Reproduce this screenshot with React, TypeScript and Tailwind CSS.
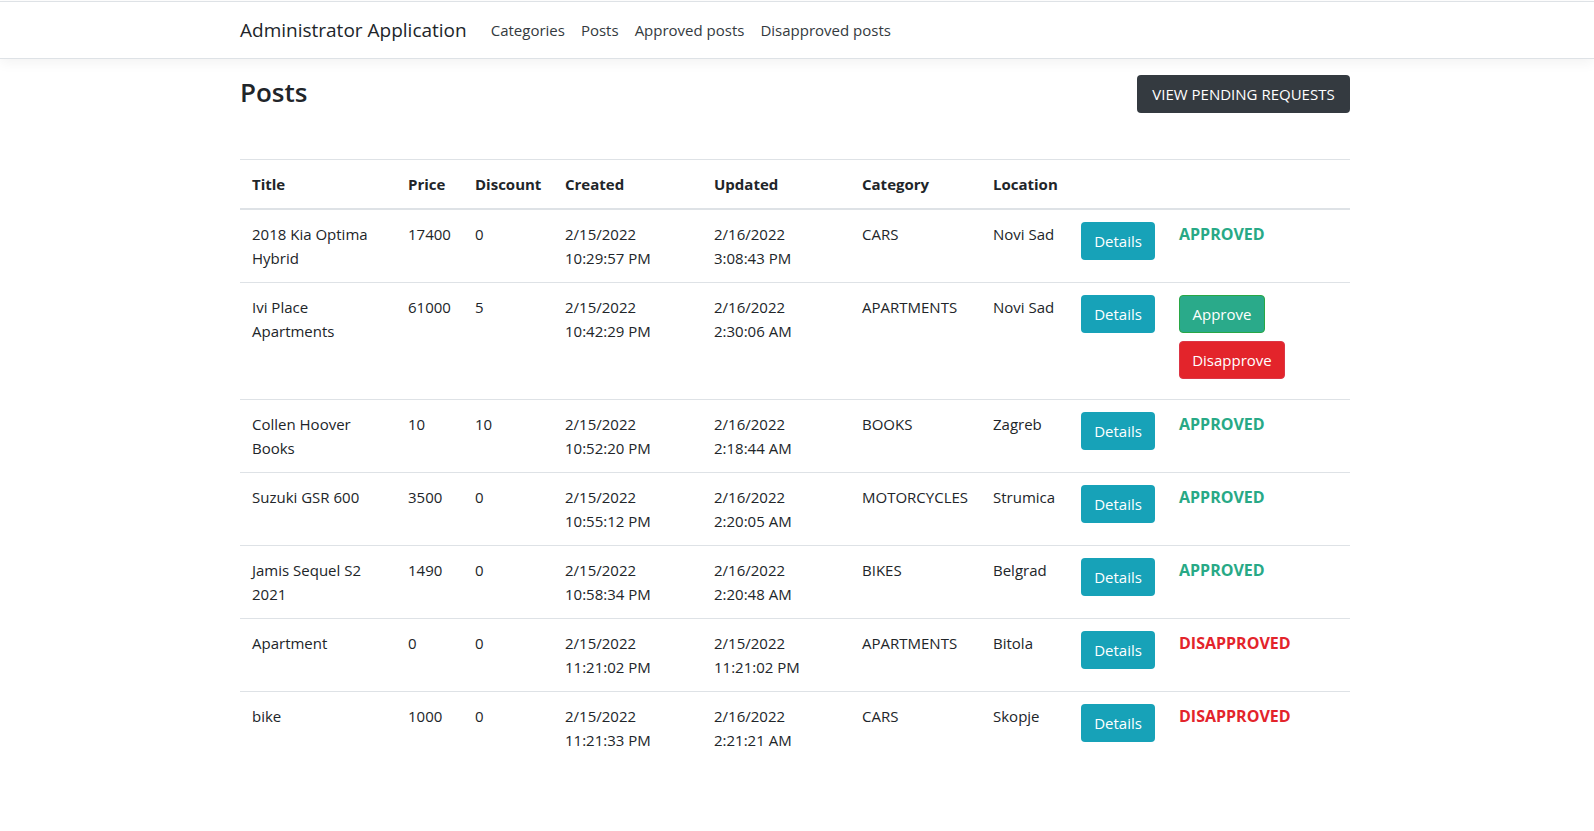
const navLinks = ["Categories", "Posts", "Approved posts", "Disapproved posts"];

type Post = {
    title: string;
    price: number;
    discount: number;
    created: string;
    updated: string;
    category: string;
    location: string;
    status: "APPROVED" | "DISAPPROVED" | "PENDING";
};

const posts: Post[] = [
    { title: "2018 Kia Optima Hybrid", price: 17400, discount: 0, created: "2/15/2022 10:29:57 PM", updated: "2/16/2022 3:08:43 PM", category: "CARS", location: "Novi Sad", status: "APPROVED" },
    { title: "Ivi Place Apartments", price: 61000, discount: 5, created: "2/15/2022 10:42:29 PM", updated: "2/16/2022 2:30:06 AM", category: "APARTMENTS", location: "Novi Sad", status: "PENDING" },
    { title: "Collen Hoover Books", price: 10, discount: 10, created: "2/15/2022 10:52:20 PM", updated: "2/16/2022 2:18:44 AM", category: "BOOKS", location: "Zagreb", status: "APPROVED" },
    { title: "Suzuki GSR 600", price: 3500, discount: 0, created: "2/15/2022 10:55:12 PM", updated: "2/16/2022 2:20:05 AM", category: "MOTORCYCLES", location: "Strumica", status: "APPROVED" },
    { title: "Jamis Sequel S2 2021", price: 1490, discount: 0, created: "2/15/2022 10:58:34 PM", updated: "2/16/2022 2:20:48 AM", category: "BIKES", location: "Belgrad", status: "APPROVED" },
    { title: "Apartment", price: 0, discount: 0, created: "2/15/2022 11:21:02 PM", updated: "2/15/2022 11:21:02 PM", category: "APARTMENTS", location: "Bitola", status: "DISAPPROVED" },
    { title: "bike", price: 1000, discount: 0, created: "2/15/2022 11:21:33 PM", updated: "2/16/2022 2:21:21 AM", category: "CARS", location: "Skopje", status: "DISAPPROVED" },
];

const Navbar = () => {
    return (
        <header className="mt-px border-y border-[#dee2e6] bg-white shadow-[0_4px_12px_rgba(0,0,0,0.05)]">
            <nav className="max-w-[1144px] h-14 mx-auto pl-[15px] pr-[19px] flex items-center">
                <a href="#" className="mr-4 text-[19px] leading-[30px] text-[#212529]">Administrator Application</a>
                <ul className="flex">
                    {navLinks.map((link) => (
                        <li key={link}>
                            <a href="#" className="block p-2 text-[#343a40]">{link}</a>
                        </li>
                    ))}
                </ul>
            </nav>
        </header>
    );
};

const PostRow = ({ post }: { post: Post }) => {
    return (
        <tr className="align-top border-t border-[#dee2e6]">
            <td className="p-3">{post.title}</td>
            <td className="p-3">{post.price}</td>
            <td className="p-3">{post.discount}</td>
            <td className="p-3">{post.created}</td>
            <td className="p-3">{post.updated}</td>
            <td className="p-3 whitespace-nowrap">{post.category}</td>
            <td className="p-3 whitespace-nowrap">{post.location}</td>
            <td className="px-3 pt-3">
                <button className="block h-[38px] w-[74px] rounded bg-[#17a2b8] text-white">Details</button>
            </td>
            <td className="p-3">
                {post.status === "APPROVED" && <b className="block text-[16px] leading-6 text-[#28a986]">APPROVED</b>}
                {post.status === "DISAPPROVED" && <b className="block text-[16px] leading-6 text-[#e3242b]">DISAPPROVED</b>}
                {post.status === "PENDING" && (
                    <>
                        <button className="block h-[38px] w-[86px] mb-2 rounded border border-[#28a745] bg-[#2aaa8a] text-white">Approve</button>
                        <button className="block h-[38px] w-[106px] mb-2 rounded border border-[#dc3545] bg-[#e3242b] text-white">Disapprove</button>
                    </>
                )}
            </td>
        </tr>
    );
};

const App = () => {
    return (
        <div className="font-['Open_Sans','Noto_Sans',sans-serif] text-[15px] leading-6 text-[#212529]">
            <Navbar />
            <main className="max-w-[1144px] mx-auto pl-[15px] pr-[19px] pt-4">
                <div className="mb-[46px] flex items-start justify-between">
                    <h1 className="text-[26px] leading-[34px] font-semibold">Posts</h1>
                    <button className="h-[38px] w-[213px] rounded bg-[#343a40] text-white">VIEW PENDING REQUESTS</button>
                </div>
                <table className="w-full table-fixed border-collapse">
                    <colgroup>
                        <col className="w-[156px]" />
                        <col className="w-[67px]" />
                        <col className="w-[90px]" />
                        <col className="w-[149px]" />
                        <col className="w-[148px]" />
                        <col className="w-[131px]" />
                        <col className="w-[88px]" />
                        <col className="w-[98px]" />
                        <col className="w-[183px]" />
                    </colgroup>
                    <thead>
                        <tr className="border-t border-b-2 border-t-[#dee2e6] border-b-[#dee2e6] text-left">
                            <th className="p-3">Title</th>
                            <th className="p-3">Price</th>
                            <th className="p-3">Discount</th>
                            <th className="p-3">Created</th>
                            <th className="p-3">Updated</th>
                            <th className="p-3">Category</th>
                            <th className="p-3">Location</th>
                            <td className="p-3"></td>
                            <td className="p-3"></td>
                        </tr>
                    </thead>
                    <tbody>
                        {posts.map((post) => (
                            <PostRow key={post.title} post={post} />
                        ))}
                    </tbody>
                </table>
            </main>
        </div>
    );
};

export default App;
